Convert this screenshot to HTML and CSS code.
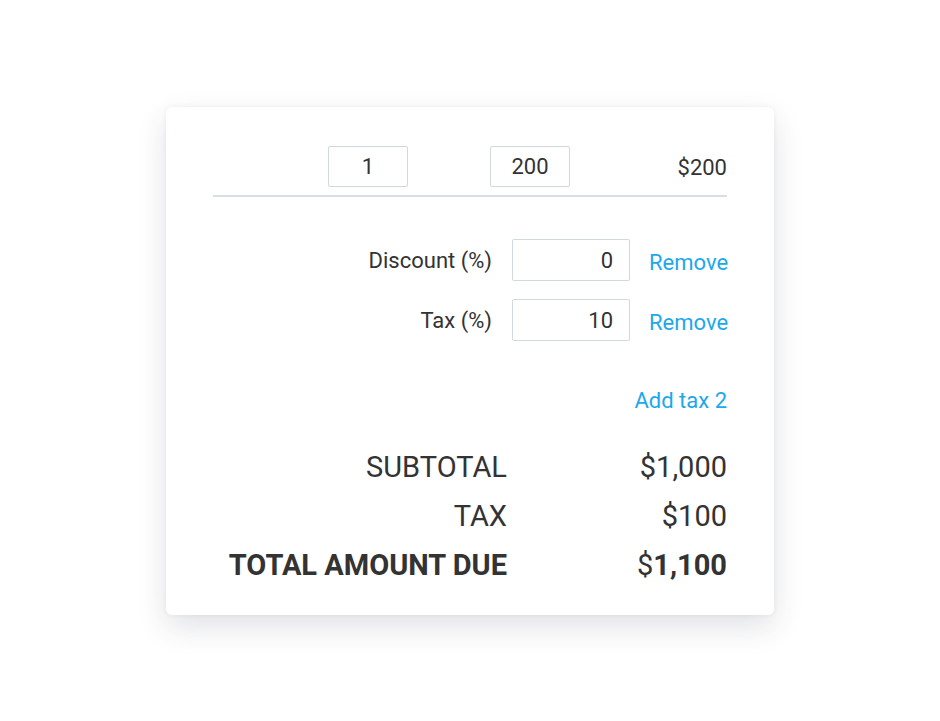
FILE: index.html
```html
<!DOCTYPE html>
<html>
<head>
<meta charset="utf-8">
<link rel="stylesheet" href="styles.css">
</head>
<body>
<div class="card">
  <div class="item-row">
    <div class="box qty">1</div>
    <div class="box price">200</div>
    <div class="amount">$200</div>
  </div>
  <div class="adjust">
    <div class="label">Discount (%)</div>
    <div class="box field">0</div>
    <a class="link">Remove</a>
    <div class="label">Tax (%)</div>
    <div class="box field">10</div>
    <a class="link">Remove</a>
  </div>
  <div class="add-row"><a class="link">Add tax 2</a></div>
  <div class="totals">
    <div class="t-label">SUBTOTAL</div>
    <div class="t-value">$1,000</div>
    <div class="t-label">TAX</div>
    <div class="t-value">$100</div>
    <div class="t-label strong">TOTAL AMOUNT DUE</div>
    <div class="t-value"><span class="cur">$</span><span class="strong">1,100</span></div>
  </div>
</div>
</body>
</html>
```
FILE: styles.css
```css
html, body {
  margin: 0;
  padding: 0;
  background: #ffffff;
}
body {
  font-family: Roboto, "Liberation Sans", sans-serif;
  color: #333333;
  padding-top: 107px;
  padding-left: 166px;
  min-height: 721px;
  box-sizing: border-box;
}
.card {
  width: 608px;
  height: 508px;
  box-sizing: border-box;
  background: #fff;
  border-radius: 6px;
  box-shadow: 0 12px 30px rgba(40, 50, 70, 0.14), 0 0 5px rgba(40, 50, 70, 0.06);
  padding: 39px 47px 0 47px;
}
.box {
  box-sizing: border-box;
  border: 1px solid #cfd9df;
  border-radius: 2px;
  font-size: 22px;
  display: flex;
  align-items: center;
  color: #333;
}
.item-row {
  display: flex;
  align-items: center;
  padding-bottom: 8px;
  border-bottom: 2px solid #d7dfe5;
}
.qty, .price {
  width: 80px;
  height: 41px;
  justify-content: center;
}
.qty { margin-left: 115px; }
.price { margin-left: 82px; }
.amount {
  margin-left: auto;
  font-size: 22px;
  line-height: 26px;
  padding-top: 2px;
}
.adjust {
  margin-top: 42px;
  display: grid;
  grid-template-columns: 1fr 118px 78px;
  column-gap: 19px;
  row-gap: 18px;
  align-items: center;
}
.label {
  text-align: right;
  font-size: 22px;
  line-height: 26px;
  padding-right: 1px;
  padding-top: 2px;
}
.field {
  height: 42px;
  justify-content: flex-end;
  padding-right: 16px;
}
.link {
  color: #1ba8ec;
  font-size: 22px;
  line-height: 26px;
  text-align: right;
  padding-top: 6px;
}
.add-row {
  margin-top: 47px;
  text-align: right;
  line-height: 26px;
}
.totals {
  margin-top: 36px;
  display: grid;
  grid-template-columns: 1fr 220px;
  row-gap: 18px;
  font-size: 29px;
  line-height: 31px;
}
.t-label, .t-value { text-align: right; }
.strong { font-weight: 700; }
.cur { font-weight: 400; }
```
